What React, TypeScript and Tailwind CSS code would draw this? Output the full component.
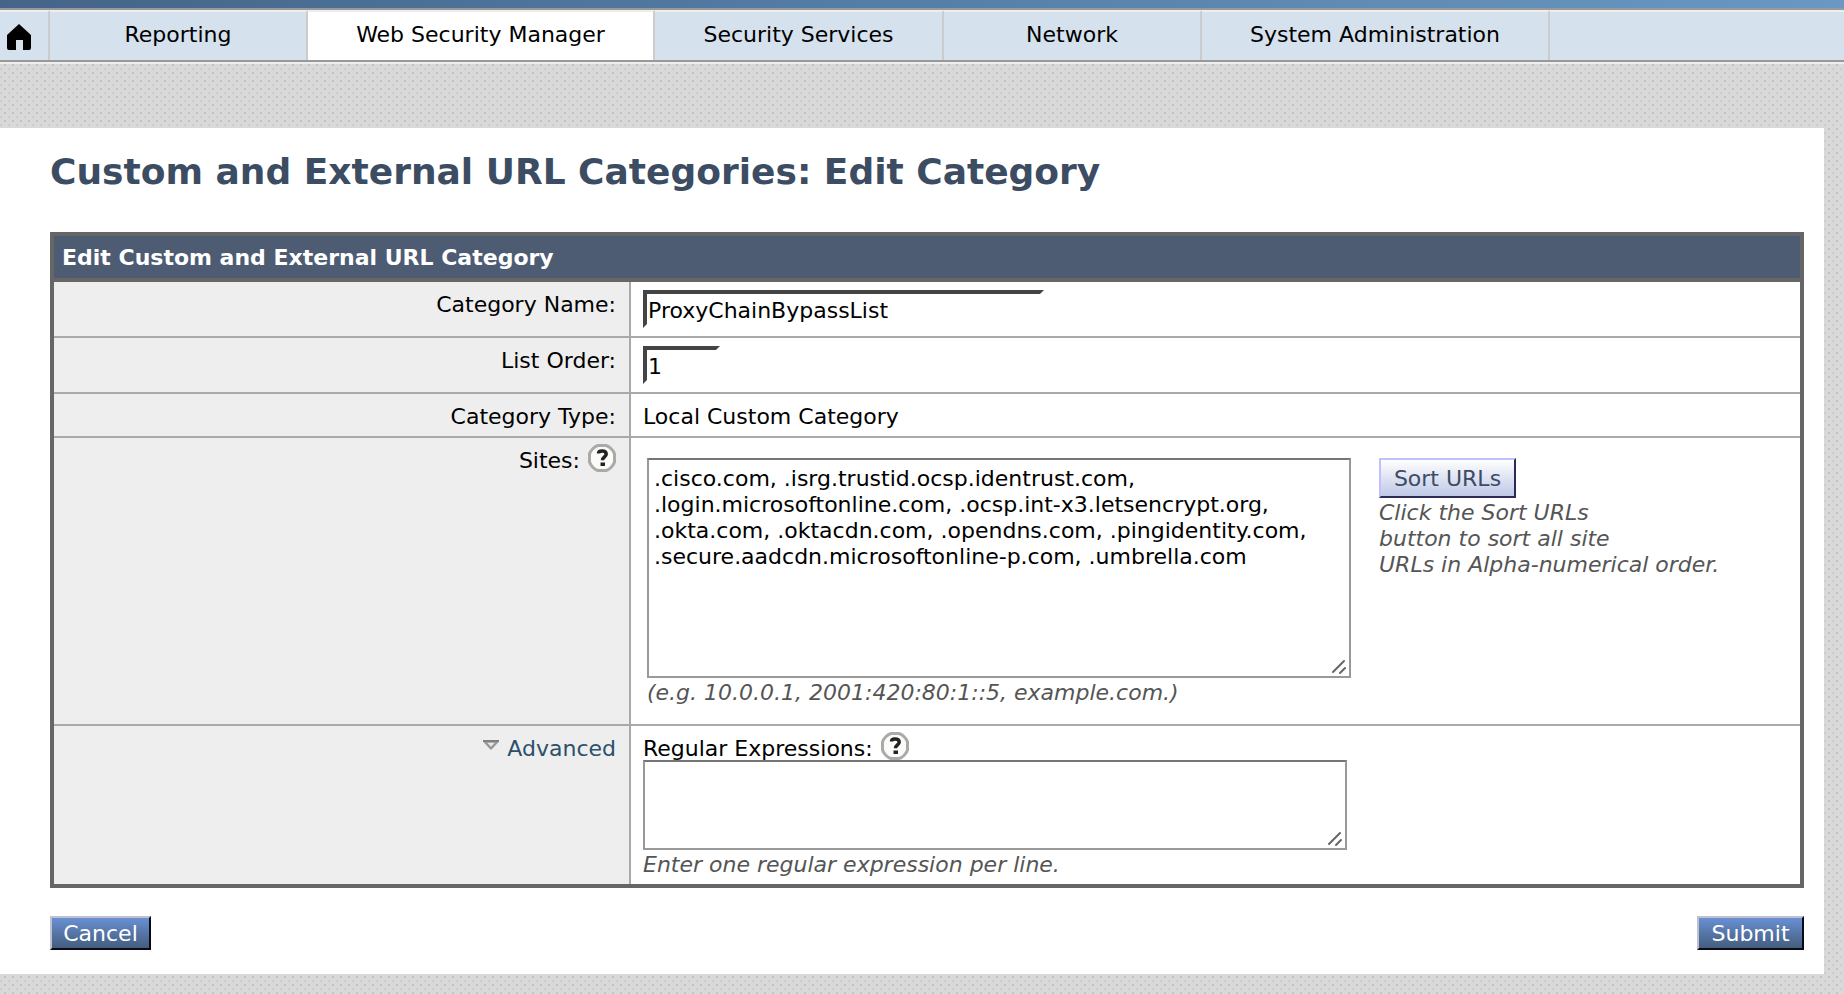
import { useState } from "react";

const tabs = [
  { label: "Reporting", width: "w-[258px]" },
  { label: "Web Security Manager", width: "w-[347px]", active: true },
  { label: "Security Services", width: "w-[289px]" },
  { label: "Network", width: "w-[258px]" },
  { label: "System Administration", width: "w-[348px]" },
];

const siteList =
  ".cisco.com, .isrg.trustid.ocsp.identrust.com, .login.microsoftonline.com, .ocsp.int-x3.letsencrypt.org, .okta.com, .oktacdn.com, .opendns.com, .pingidentity.com, .secure.aadcdn.microsoftonline-p.com, .umbrella.com";

const lineClass = "border-b-2 border-[#a9a9a9]";
const labelCell = "border-r-2 border-[#a9a9a9] bg-[#eee] pr-[13px] text-right align-top font-normal";
const inputClass =
  "block h-[38px] border-4 border-t-[#444] border-l-[#444] border-r-white border-b-white bg-white px-px pt-0.5 outline-none";
const areaClass =
  "block w-full resize-none border-2 border-[#999] border-t-[#767676] bg-white px-[5px] py-1.5 outline-none";
const actionClass =
  "h-[34px] border-2 border-t-[#c0c0d0] border-l-[#c0c0d0] border-r-[#0a0a14] border-b-[#0a0a14] bg-linear-to-b from-[#6890d4] to-[#455d7e] pt-0.5 leading-7 text-white";

function HelpButton({ label }: { label: string }) {
  return (
    <button type="button" aria-label={label} className="h-7 w-7 shrink-0">
      <svg viewBox="0 0 28 28" className="h-7 w-7">
        <path
          d="M10 1.5h8c3.500 1 7.500 5 8.500 8.500v8c-1 3.500-5 7.500-8.500 8.500h-8c-3.500-1-7.500-5-8.500-8.500v-8C2.500 6.500 6.500 2.500 10 1.500z"
          fill="#fbfbf8"
          stroke="#aaaaa8"
          strokeWidth="3"
        />
        <path d="M10.500 9.500C10.500 7.800 12 7 14 7c2.600 0 4.200 1.200 4.200 3.200 0 2.600-3.700 2.800-3.700 6" fill="none" stroke="#222" strokeWidth="3.500" />
        <path d="M12.500 18.500h4.500v3.500h-4.500z" fill="#222" />
      </svg>
    </button>
  );
}

// small grip lines in the corner of a text area
function Grip() {
  return (
    <svg
      viewBox="0 0 16 16"
      className="pointer-events-none absolute right-1 bottom-[3px] h-4 w-4"
      fill="none"
      stroke="#666"
      strokeWidth="2"
      strokeLinecap="round"
    >
      <path d="M2 13L13 2M9 14l5-5" />
    </svg>
  );
}

// speckled grey page texture
function Texture() {
  return (
    <svg className="absolute inset-0 -z-10 h-full w-full" aria-hidden="true">
      <defs>
        <pattern id="speckle" width="8" height="8" patternUnits="userSpaceOnUse">
          <rect width="8" height="8" fill="#d9d9d9" />
          <rect x="4" y="0" width="2" height="2" fill="#c3c3c3" />
          <rect x="0" y="4" width="2" height="2" fill="#cccccc" />
        </pattern>
      </defs>
      <rect width="100%" height="100%" fill="url(#speckle)" />
    </svg>
  );
}

export default function App() {
  const [name, setName] = useState("ProxyChainBypassList");
  const [order, setOrder] = useState("1");
  const [sites, setSites] = useState(siteList);
  const [regex, setRegex] = useState("");
  const [open, setOpen] = useState(true);

  const sortSites = () => {
    setSites(sites.split(/,\s*/).sort().join(", "));
  };

  return (
    <div className="relative isolate min-h-screen font-['Verdana','DejaVu_Sans',sans-serif] text-[22px] leading-[26px] text-black">
      <Texture />
      <div className="h-2 bg-linear-to-r from-[#446488] via-[#557fa8] to-[#6a98c2]"></div>
      <nav className="flex h-[54px] border-y-2 border-[#999] bg-[#d6e1ee] shadow-[0_2px_#eee]">
        <a href="#home" aria-label="Home" className="w-[50px] border-t-2 border-r-2 border-t-[#eee] border-r-[#ccc] pt-3 pl-[7px]">
          <svg viewBox="0 0 24 26" className="h-[26px] w-6">
            <path d="M12 0L24 11v13a2 2 0 0 1-2 2h-6V16H9v10H2a2 2 0 0 1-2-2V11z" />
          </svg>
        </a>
        {tabs.map((tab) => (
          <a
            key={tab.label}
            href="#tab"
            className={`${tab.width} border-t-2 border-r-2 border-t-[#eee] border-r-[#ccc] pt-[10px] text-center whitespace-nowrap ${tab.active ? "bg-white" : ""}`}
          >
            {tab.label}
          </a>
        ))}
        <div className="flex-1 border-t-2 border-[#eee]"></div>
      </nav>

      <main className="mt-[66px] mr-5 bg-white pt-6 pr-5 pb-6 pl-[50px]">
        <h1 className="text-4xl leading-10 font-bold text-[#3b4c63]">Custom and External URL Categories: Edit Category</h1>

        <form onSubmit={(e) => e.preventDefault()}>
          <div className="mt-10 border-4 border-[#666] bg-white">
            <table className="w-full table-fixed border-separate border-spacing-0">
              <colgroup>
                <col className="w-[577px]" />
                <col />
              </colgroup>
              <thead>
                <tr>
                  <th colSpan={2} className="h-[46px] border-b-4 border-[#666] bg-[#4d5b73] px-2 pt-0.5 text-left font-bold text-white">
                    Edit Custom and External URL Category
                  </th>
                </tr>
              </thead>
              <tbody>
                <tr>
                  <th className={`${labelCell} ${lineClass} pt-[10px]`}>
                    <label htmlFor="name">Category Name:</label>
                  </th>
                  <td className={`${lineClass} px-3 py-2`}>
                    <input id="name" className={`${inputClass} w-[401px]`} value={name} onChange={(e) => setName(e.target.value)} />
                  </td>
                </tr>
                <tr>
                  <th className={`${labelCell} ${lineClass} pt-[10px]`}>
                    <label htmlFor="order">List Order:</label>
                  </th>
                  <td className={`${lineClass} px-3 py-2`}>
                    <input id="order" className={`${inputClass} w-[77px]`} value={order} onChange={(e) => setOrder(e.target.value)} />
                  </td>
                </tr>
                <tr>
                  <th className={`${labelCell} ${lineClass} pt-[10px] pb-1.5`}>Category Type:</th>
                  <td className={`${lineClass} px-3 pt-[10px] pb-1.5`}>Local Custom Category</td>
                </tr>
                <tr>
                  <th className={`${labelCell} ${lineClass} pt-1.5`}>
                    <div className="flex items-start justify-end gap-2">
                      <label htmlFor="sites" className="pt-1">
                        Sites:
                      </label>
                      <HelpButton label="Help for sites" />
                    </div>
                  </th>
                  <td className={`${lineClass} px-4 pt-5 pb-[18px] align-top`}>
                    <div className="flex gap-7">
                      <div className="w-[704px]">
                        <div className="relative">
                          <textarea
                            id="sites"
                            className={`${areaClass} h-[220px]`}
                            spellCheck={false}
                            value={sites}
                            onChange={(e) => setSites(e.target.value)}
                          />
                          <Grip />
                        </div>
                        <p className="mt-0.5 text-[#555] italic">(e.g. 10.0.0.1, 2001:420:80:1::5, example.com.)</p>
                      </div>
                      <div className="text-[#555] italic">
                        <button
                          type="button"
                          onClick={sortSites}
                          className="block h-10 w-[137px] border-2 border-t-[#c0c0ff] border-l-[#c0c0ff] border-r-[#2b2b55] border-b-[#2b2b55] bg-linear-to-b from-white to-[#bfc8e6] pt-0.5 text-[#3b4c63] not-italic"
                        >
                          Sort URLs
                        </button>
                        <p className="mt-0.5">
                          Click the Sort URLs
                          <br />
                          button to sort all site
                          <br />
                          URLs in Alpha-numerical order.
                        </p>
                      </div>
                    </div>
                  </td>
                </tr>
                <tr>
                  <th className={`${labelCell} pt-[10px]`}>
                    <div className="flex justify-end">
                      <button type="button" aria-expanded={open} onClick={() => setOpen(!open)} className="flex items-start gap-2 text-[#2c506b]">
                        <svg viewBox="0 0 16 10" className="mt-1 h-[10px] w-4">
                          <path d="M1.500 1.500h13L8 8.500z" fill="#e8e8e8" stroke="#999" strokeWidth="2.500" strokeLinejoin="round" />
                          <path d="M0 1h16" stroke="#808080" strokeWidth="2" />
                        </svg>
                        Advanced
                      </button>
                    </div>
                  </th>
                  <td className="px-3 pt-1.5 pb-1.5 align-top">
                    {open && (
                      <div className="w-[704px]">
                        <div className="flex h-7 items-start gap-2">
                          <label htmlFor="regex" className="pt-1">
                            Regular Expressions:
                          </label>
                          <HelpButton label="Help for regular expressions" />
                        </div>
                        <div className="relative">
                          <textarea id="regex" className={`${areaClass} h-[90px]`} value={regex} onChange={(e) => setRegex(e.target.value)} />
                          <Grip />
                        </div>
                        <p className="mt-0.5 text-[#555] italic">Enter one regular expression per line.</p>
                      </div>
                    )}
                  </td>
                </tr>
              </tbody>
            </table>
          </div>

          <div className="mt-7 flex justify-between">
            <button type="button" className={`${actionClass} w-[101px]`}>
              Cancel
            </button>
            <button type="submit" className={`${actionClass} w-[107px]`}>
              Submit
            </button>
          </div>
        </form>
      </main>
    </div>
  );
}
